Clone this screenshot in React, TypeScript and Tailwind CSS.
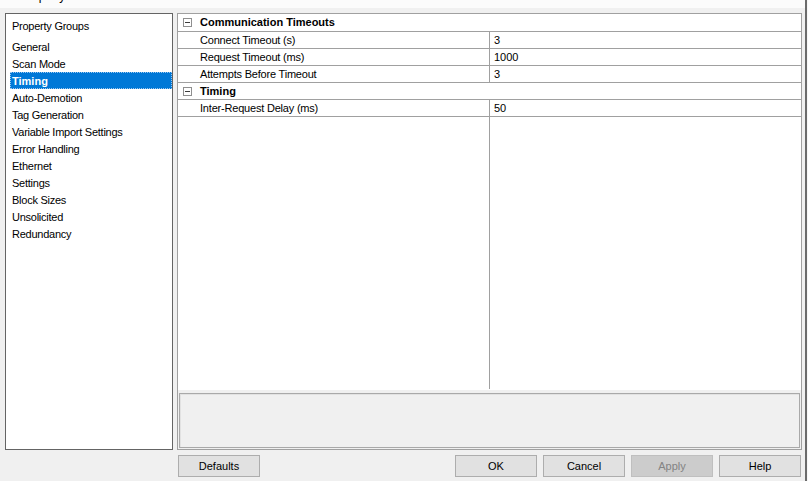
import React from "react";

type PropertyRow = {
  name: string;
  value: string;
};

type Section = {
  title: string;
  rows: PropertyRow[];
};

const groups = [
  "General",
  "Scan Mode",
  "Timing",
  "Auto-Demotion",
  "Tag Generation",
  "Variable Import Settings",
  "Error Handling",
  "Ethernet",
  "Settings",
  "Block Sizes",
  "Unsolicited",
  "Redundancy"
];

const sections: Section[] = [
  {
    title: "Communication Timeouts",
    rows: [
      { name: "Connect Timeout (s)", value: "3" },
      { name: "Request Timeout (ms)", value: "1000" },
      { name: "Attempts Before Timeout", value: "3" }
    ]
  },
  {
    title: "Timing",
    rows: [{ name: "Inter-Request Delay (ms)", value: "50" }]
  }
];

function CollapseBox() {
  return (
    <svg width="9" height="9" viewBox="0 0 9 9" aria-hidden="true">
      <rect x="0.5" y="0.5" width="8" height="8" fill="#ffffff" stroke="#8f8f8f" />
      <line x1="2" y1="4.5" x2="7" y2="4.5" stroke="#3c3c3c" />
    </svg>
  );
}

function DialogButton({
  label,
  disabled
}: {
  label: string;
  disabled?: boolean;
}) {
  return (
    <div
      className={
        disabled
          ? "h-[22px] w-[82px] border border-[#bfbfbf] bg-[#cccccc] text-center leading-[20px] text-[#838383]"
          : "h-[22px] w-[82px] border border-[#adadad] bg-[#e1e1e1] text-center leading-[20px] text-black"
      }
    >
      {label}
    </div>
  );
}

export default function App() {
  const selected = "Timing";

  return (
    <div className="flex h-[481px] w-[808px] overflow-hidden bg-[#f0f0f0] font-['Liberation_Sans',Arial,sans-serif] text-[11px] text-black">
      <div className="flex w-[805px] flex-col">
        {/* window caption, mostly scrolled off */}
        <div className="h-[8px] overflow-hidden bg-[#fbfbfb] pl-[20px]">
          <div className="-mt-[12px] text-[12px] leading-[16px]">
            Property Editor
          </div>
        </div>

        <div className="mt-[5px] flex pl-[5px]">
          {/* property group list */}
          <div className="h-[437px] w-[168px] border border-[#646464] bg-white pt-[4px] tracking-[-0.25px]">
            <div className="h-[17px] pl-[6px] leading-[17px]">
              Property Groups
            </div>
            <div className="mt-[3px]">
              {groups.map((group) =>
                group === selected ? (
                  <div
                    key={group}
                    className="ml-[4px] h-[17px] bg-[#0078d7] pl-[2px] font-bold leading-[18px] tracking-normal text-white outline outline-1 -outline-offset-1 outline-dotted outline-[#9cc7ef]"
                  >
                    {group}
                  </div>
                ) : (
                  <div
                    key={group}
                    className="ml-[4px] h-[17px] pl-[2px] leading-[18px]"
                  >
                    {group}
                  </div>
                )
              )}
            </div>
          </div>

          {/* property grid + description */}
          <div className="ml-[4px] flex h-[437px] w-[625px] flex-col border border-[#a0a0a0]">
            <div className="flex h-[376px] flex-col bg-white">
              {sections.map((section, i) => (
                <React.Fragment key={section.title}>
                  <div
                    className={
                      i === 0
                        ? "flex h-[18px] items-center border-b border-[#a0a0a0]"
                        : "flex h-[17px] items-center border-b border-[#a0a0a0]"
                    }
                  >
                    <div className="flex w-[22px] items-center pl-[5px]">
                      <CollapseBox />
                    </div>
                    <span className="font-bold">{section.title}</span>
                  </div>
                  {section.rows.map((row) => (
                    <div
                      key={row.name}
                      className="flex h-[17px] border-b border-[#a0a0a0] leading-[16px]"
                    >
                      <div className="w-[312px] border-r border-[#a0a0a0] pl-[22px] tracking-[-0.2px]">
                        {row.name}
                      </div>
                      <div className="flex-1 pl-[4px]">{row.value}</div>
                    </div>
                  ))}
                </React.Fragment>
              ))}
              <div className="flex flex-1 pb-[1px]">
                <div className="w-[312px] border-r border-[#a0a0a0]" />
              </div>
            </div>

            <div className="mx-[1px] mt-[3px] h-[55px] border border-[#a9a9a9] bg-[#f0f0f0] shadow-[inset_1px_1px_0_#e2e2e2]" />
          </div>
        </div>

        {/* dialog buttons */}
        <div className="mt-[5px] flex pl-[178px] pr-[4px]">
          <DialogButton label="Defaults" />
          <div className="ml-auto flex gap-[6px]">
            <DialogButton label="OK" />
            <DialogButton label="Cancel" />
            <DialogButton label="Apply" disabled />
            <DialogButton label="Help" />
          </div>
        </div>
      </div>
      <div className="w-[2px] bg-[#6b6b6b]" />
      <div className="flex-1 bg-[#f7f7f7]" />
    </div>
  );
}
